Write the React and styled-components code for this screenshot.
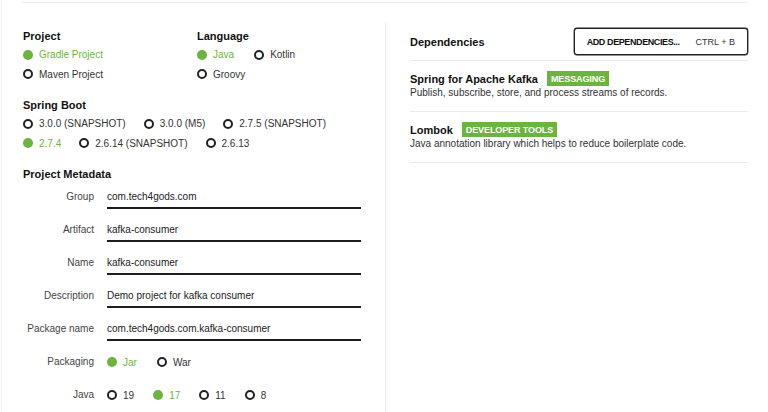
import React from 'react';
import styled, { createGlobalStyle } from 'styled-components';

const GREEN = '#6db33f';

const GlobalStyle = createGlobalStyle`
  html, body {
    margin: 0;
    padding: 0;
    background: #fff;
  }
  body {
    font-family: "Liberation Sans", Arial, sans-serif;
    color: #222;
    overflow: hidden;
  }
`;

const Page = styled.div`
  display: flex;
  flex-direction: column;
  height: 100vh;
  margin-left: 1px;
  border-left: 1px solid #edf2f2;
  padding: 2px 20px 0 20px;
  box-sizing: border-box;
  overflow: hidden;
`;

const TopRule = styled.div`
  border-top: 1px solid #e6eeee;
`;

const Main = styled.div`
  flex: 1;
  display: grid;
  grid-template-columns: 364px 1fr;
  margin-top: 19px;
`;

const LeftColumn = styled.div`
  border-right: 1px solid #e8eeee;
  padding: 7px 0 0 1px;
`;

const RightColumn = styled.div`
  padding: 6px 0 0 24px;
`;

const TopRow = styled.div`
  display: flex;
`;

const Section = styled.div`
  width: ${p => p.width || 'auto'};
  margin-top: ${p => p.spaced ? '14px' : '0'};
`;

const Heading = styled.h3`
  margin: 0 0 2px;
  font-size: 11px;
  line-height: 14px;
  font-weight: 700;
  color: #111;
`;

const Options = styled.div`
  display: flex;
  flex-wrap: wrap;
  column-gap: ${p => p.gap || 18}px;
  max-width: ${p => p.max || 'none'};
`;

const Option = styled.label`
  display: flex;
  align-items: center;
  height: ${p => p.tight ? '14px' : '19.5px'};
  gap: 6px;
  font-size: 10px;
  color: ${p => p.checked ? GREEN : '#333'};
  white-space: nowrap;
`;

const Dot = styled.span`
  width: 10px;
  height: 10px;
  border-radius: 50%;
  box-sizing: border-box;
  background: ${p => p.checked ? GREEN : '#fff'};
  border: ${p => p.checked ? 'none' : '2px solid #222'};
  flex-shrink: 0;
`;

const Fields = styled.div`
  display: grid;
  grid-template-columns: 71px 254px;
  column-gap: 13px;
  row-gap: 14px;
  margin-top: 9px;
`;

const Label = styled.div`
  font-size: 10px;
  line-height: 14px;
  color: #444;
  text-align: right;
`;

const Input = styled.div`
  font-size: 10px;
  line-height: 14px;
  color: #222;
  padding-bottom: 3px;
  border-bottom: 2px solid #1d1d1d;
`;

const Inline = styled.div`
  display: flex;
  column-gap: ${p => p.gap || 19}px;
  height: 19px;
  align-items: flex-start;
`;

const DepHeader = styled.div`
  display: flex;
  justify-content: space-between;
  align-items: center;
  padding-bottom: 5px;
  border-bottom: 1px solid #e7eded;
`;

const DepTitle = styled.h3`
  margin: 0;
  font-size: 11px;
  font-weight: 700;
  color: #111;
`;

const AddButton = styled.button`
  display: flex;
  align-items: center;
  gap: 16px;
  height: 27px;
  padding: 0 12px;
  background: #fff;
  border: 1px solid #222;
  border-radius: 3px;
  box-shadow: 0 0 0 0.4px #222;
  font-family: inherit;
  color: #111;
  cursor: pointer;

  b {
    font-size: 9px;
    letter-spacing: -0.4px;
  }

  span {
    font-size: 9px;
    color: #333;
  }
`;

const DepItem = styled.div`
  padding: 10px 0 11px;
  border-bottom: 1px solid #e7eded;
`;

const DepName = styled.div`
  display: flex;
  align-items: center;
  gap: 9px;
  height: 15px;
  font-size: 11px;
  font-weight: 700;
  color: #111;
`;

const Badge = styled.span`
  display: inline-flex;
  align-items: center;
  height: 15px;
  padding: 0 4px;
  background: ${GREEN};
  color: #fff;
  font-size: 9px;
  font-weight: 700;
  letter-spacing: -0.1px;
`;

const DepDesc = styled.div`
  font-size: 10px;
  line-height: 14px;
  color: #333;
`;

const Radio = ({ label, checked, tight }) => (
  <Option checked={checked} tight={tight}>
    <Dot checked={checked} />
    {label}
  </Option>
);

const springBoot = [
  ['3.0.0 (SNAPSHOT)', false],
  ['3.0.0 (M5)', false],
  ['2.7.5 (SNAPSHOT)', false],
  ['2.7.4', true],
  ['2.6.14 (SNAPSHOT)', false],
  ['2.6.13', false],
];

const metadata = [
  ['Group', 'com.tech4gods.com'],
  ['Artifact', 'kafka-consumer'],
  ['Name', 'kafka-consumer'],
  ['Description', 'Demo project for kafka consumer'],
  ['Package name', 'com.tech4gods.com.kafka-consumer'],
];

const dependencies = [
  {
    name: 'Spring for Apache Kafka',
    tag: 'MESSAGING',
    desc: 'Publish, subscribe, store, and process streams of records.',
  },
  {
    name: 'Lombok',
    tag: 'DEVELOPER TOOLS',
    desc: 'Java annotation library which helps to reduce boilerplate code.',
  },
];

const App = () => (
  <>
    <GlobalStyle />
    <Page>
      <TopRule />
      <Main>
        <LeftColumn>
          <TopRow>
            <Section width="174px">
              <Heading>Project</Heading>
              <Radio label="Gradle Project" checked />
              <Radio label="Maven Project" />
            </Section>
            <Section>
              <Heading>Language</Heading>
              <Options max="110px" gap={20}>
                <Radio label="Java" checked />
                <Radio label="Kotlin" />
                <Radio label="Groovy" />
              </Options>
            </Section>
          </TopRow>

          <Section spaced>
            <Heading>Spring Boot</Heading>
            <Options max="330px">
              {springBoot.map(([v, c]) => (
                <Radio key={v} label={v} checked={c} />
              ))}
            </Options>
          </Section>

          <Section spaced>
            <Heading>Project Metadata</Heading>
            <Fields>
              {metadata.map(([label, value]) => (
                <React.Fragment key={label}>
                  <Label>{label}</Label>
                  <Input>{value}</Input>
                </React.Fragment>
              ))}
              <Label>Packaging</Label>
              <Inline gap={20}>
                <Radio label="Jar" checked tight />
                <Radio label="War" tight />
              </Inline>
              <Label>Java</Label>
              <Inline gap={19}>
                <Radio label="19" tight />
                <Radio label="17" checked tight />
                <Radio label="11" tight />
                <Radio label="8" tight />
              </Inline>
            </Fields>
          </Section>
        </LeftColumn>

        <RightColumn>
          <DepHeader>
            <DepTitle>Dependencies</DepTitle>
            <AddButton>
              <b>ADD DEPENDENCIES...</b>
              <span>CTRL + B</span>
            </AddButton>
          </DepHeader>
          {dependencies.map(d => (
            <DepItem key={d.name}>
              <DepName>
                {d.name}
                <Badge>{d.tag}</Badge>
              </DepName>
              <DepDesc>{d.desc}</DepDesc>
            </DepItem>
          ))}
        </RightColumn>
      </Main>
    </Page>
  </>
);

export default App;
